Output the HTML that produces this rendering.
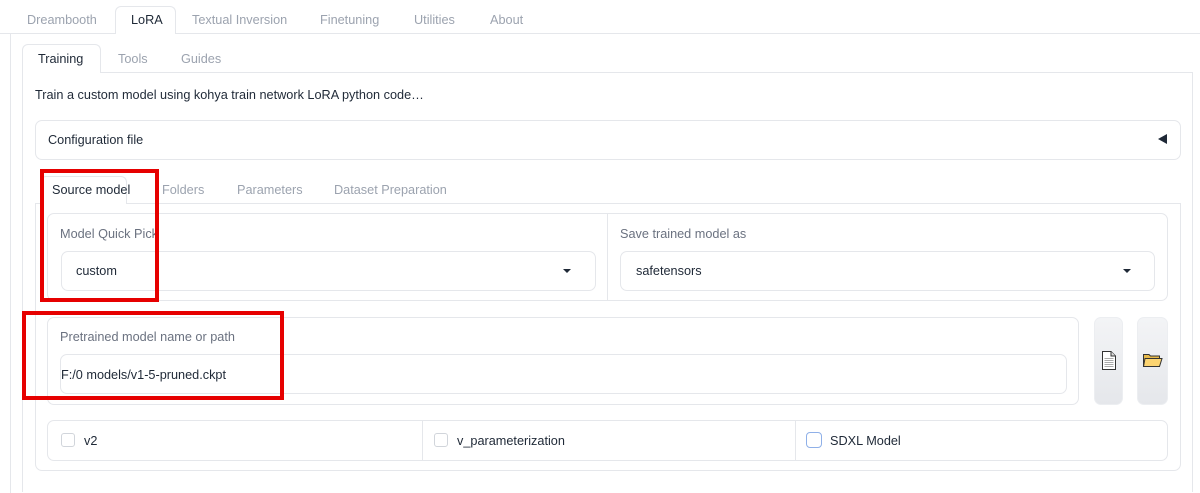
<!DOCTYPE html>
<html><head><meta charset="utf-8"><style>
*{box-sizing:border-box;margin:0;padding:0}
body{width:1200px;height:477px;background:#fff;font-family:"Liberation Sans",sans-serif;font-size:12.7px;color:#1f2937;position:relative;overflow:hidden}
.a{position:absolute}
.t{position:absolute;white-space:nowrap;line-height:16px}
.g{color:#9ca3af}
.l{color:#6b7280}
.box{position:absolute;border:1px solid #e5e7eb;border-radius:7px;background:#fff}
.red{position:absolute;border:4px solid #e60000}
.cb{position:absolute;width:14px;height:14px;border:1px solid #d1d5db;border-radius:3px;background:#fff}
.btn{position:absolute;border-radius:7px;background:linear-gradient(#f3f4f6,#e5e7eb);border:1px solid #eceef1}
.arr{position:absolute;width:0;height:0;border-left:4px solid transparent;border-right:4px solid transparent;border-top:4px solid #1f2937}
</style></head><body>
<div class="a" style="left:0;top:33px;width:1200px;border-top:1px solid #e5e7eb"></div>
<div class="a" style="left:115px;top:6px;width:61px;height:28px;border:1px solid #e5e7eb;border-bottom:none;border-radius:6px 6px 0 0;background:#fff"></div>
<div class="t g" style="left:27px;top:12px">Dreambooth</div>
<div class="t" style="left:131px;top:12px">LoRA</div>
<div class="t g" style="left:192px;top:12px">Textual Inversion</div>
<div class="t g" style="left:320px;top:12px">Finetuning</div>
<div class="t g" style="left:414px;top:12px">Utilities</div>
<div class="t g" style="left:490px;top:12px">About</div>
<div class="a" style="left:10px;top:33px;width:1200px;height:460px;border-left:1px solid #e5e7eb"></div>
<div class="a" style="left:22px;top:72px;width:1171px;height:420px;border:1px solid #e5e7eb;border-bottom:none"></div>
<div class="a" style="left:22px;top:44px;width:79px;height:29px;border:1px solid #e5e7eb;border-bottom:none;border-radius:6px 6px 0 0;background:#fff"></div>
<div class="t" style="left:38px;top:51px">Training</div>
<div class="t g" style="left:118px;top:51px">Tools</div>
<div class="t g" style="left:181px;top:51px">Guides</div>
<div class="t" style="left:35px;top:87px">Train a custom model using kohya train network LoRA python code…</div>
<div class="box" style="left:35px;top:120px;width:1146px;height:40px"></div>
<div class="t" style="left:48px;top:132px">Configuration file</div>
<div class="a" style="left:1158px;top:134px;width:0;height:0;border-top:5px solid transparent;border-bottom:5px solid transparent;border-right:9px solid #1f2937"></div>
<div class="box" style="left:35px;top:203px;width:1146px;height:268px;border-radius:0 0 7px 7px"></div>
<div class="a" style="left:40px;top:176px;width:87px;height:28px;border:1px solid #e5e7eb;border-bottom:none;border-radius:6px 6px 0 0;background:#fff"></div>
<div class="t" style="left:52px;top:182px">Source model</div>
<div class="t g" style="left:162px;top:182px">Folders</div>
<div class="t g" style="left:237px;top:182px">Parameters</div>
<div class="t g" style="left:334px;top:182px">Dataset Preparation</div>
<div class="box" style="left:47px;top:213px;width:1121px;height:88px"></div>
<div class="a" style="left:607px;top:214px;height:86px;border-left:1px solid #e5e7eb"></div>
<div class="t l" style="left:60px;top:226px">Model Quick Pick</div>
<div class="box" style="left:61px;top:251px;width:535px;height:40px"></div>
<div class="t" style="left:76px;top:263px">custom</div>
<div class="arr" style="left:563px;top:269px"></div>
<div class="t l" style="left:620px;top:226px">Save trained model as</div>
<div class="box" style="left:620px;top:251px;width:535px;height:40px"></div>
<div class="t" style="left:636px;top:263px">safetensors</div>
<div class="arr" style="left:1123px;top:269px"></div>
<div class="box" style="left:47px;top:317px;width:1032px;height:88px"></div>
<div class="t l" style="left:60px;top:329px">Pretrained model name or path</div>
<div class="box" style="left:60px;top:354px;width:1007px;height:40px"></div>
<div class="t" style="left:61px;top:367px">F:/0 models/v1-5-pruned.ckpt</div>
<div class="btn" style="left:1094px;top:317px;width:29px;height:88px"></div>
<div class="btn" style="left:1137px;top:317px;width:31px;height:88px"></div>
<svg class="a" style="left:1100px;top:350px" width="18" height="21" viewBox="0 0 18 21"><path d="M2.5 1.5h8.5l4.5 4.5v13.5h-13z" fill="#fff" stroke="#333"/><path d="M11 1.5v4.5h4.5" fill="#ddd" stroke="#333"/><path d="M4.5 8.5h9M4.5 10.5h9M4.5 12.5h9M4.5 14.5h9M4.5 16.5h9" stroke="#aaa"/></svg>
<svg class="a" style="left:1142px;top:352px" width="21" height="16" viewBox="0 0 21 16"><path d="M1.5 2.5h5.5l1.5 1.5h9v10.5h-16z" fill="#e7b94a" stroke="#333"/><path d="M3 6.5h17l-2.5 8h-16z" fill="#fcd471" stroke="#333"/></svg>
<div class="box" style="left:47px;top:420px;width:1121px;height:41px"></div>
<div class="a" style="left:422px;top:421px;height:39px;border-left:1px solid #e5e7eb"></div>
<div class="a" style="left:795px;top:421px;height:39px;border-left:1px solid #e5e7eb"></div>
<div class="cb" style="left:61px;top:433px"></div>
<div class="t" style="left:84px;top:433px">v2</div>
<div class="cb" style="left:434px;top:433px"></div>
<div class="t" style="left:457px;top:433px">v_parameterization</div>
<div class="cb" style="left:806px;top:432px;width:16px;height:16px;border:1.5px solid #8fb0e8;border-radius:4px"></div>
<div class="t" style="left:830px;top:433px">SDXL Model</div>
<div class="red" style="left:40px;top:169px;width:119px;height:133px"></div>
<div class="red" style="left:22px;top:311px;width:262px;height:89px"></div>
</body></html>
